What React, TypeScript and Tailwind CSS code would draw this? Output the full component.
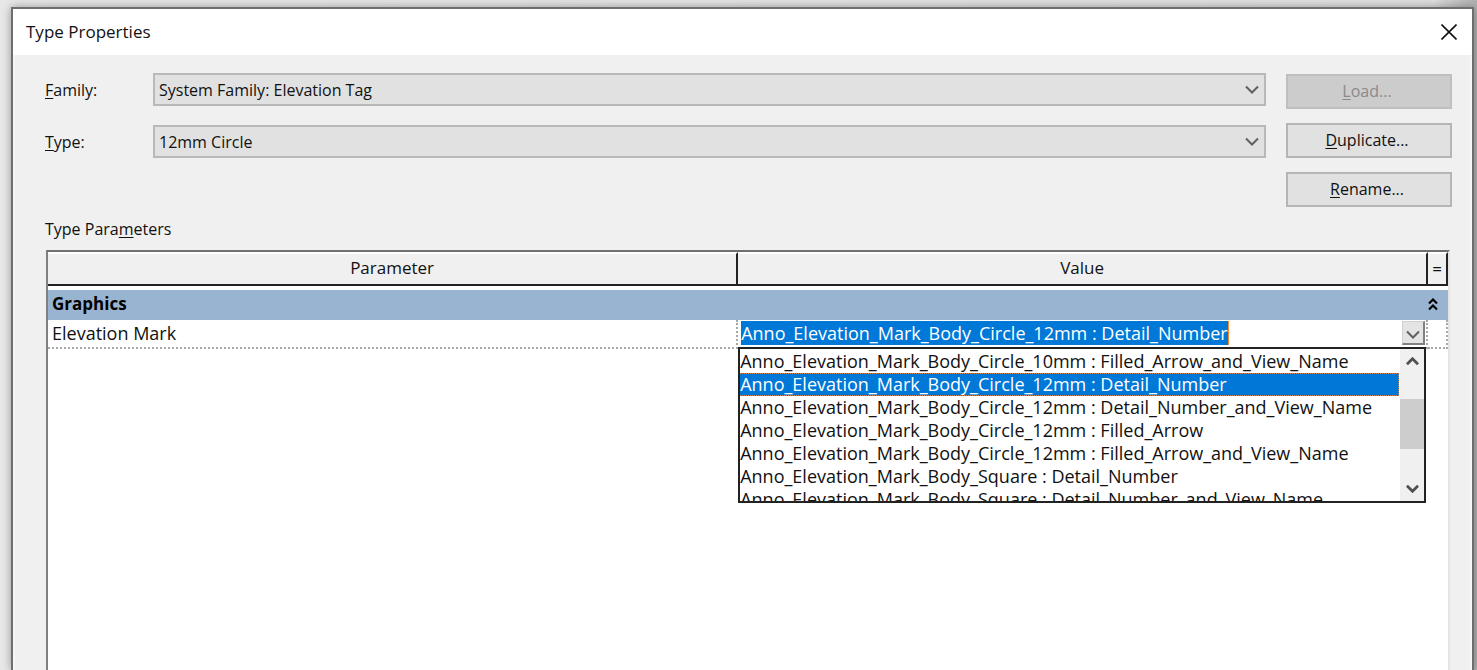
import { useState } from 'react';

const markTypes = [
  'Anno_Elevation_Mark_Body_Circle_10mm : Filled_Arrow_and_View_Name',
  'Anno_Elevation_Mark_Body_Circle_12mm : Detail_Number',
  'Anno_Elevation_Mark_Body_Circle_12mm : Detail_Number_and_View_Name',
  'Anno_Elevation_Mark_Body_Circle_12mm : Filled_Arrow',
  'Anno_Elevation_Mark_Body_Circle_12mm : Filled_Arrow_and_View_Name',
  'Anno_Elevation_Mark_Body_Square : Detail_Number',
  'Anno_Elevation_Mark_Body_Square : Detail_Number_and_View_Name',
];

function Key({ children }: { children: string }) {
  return <span className="underline decoration-1 underline-offset-2">{children}</span>;
}

function Chevron({ className, up = false }: { className: string; up?: boolean }) {
  return (
    <svg viewBox="0 0 14 9" fill="none" stroke="currentColor" className={className} aria-hidden="true">
      <path d={up ? 'M1 7.5 7 1.5 13 7.5' : 'M1 1.5 7 7.5 13 1.5'} />
    </svg>
  );
}

function DialogSelect({ id, value }: { id: string; value: string }) {
  return (
    <div className="grid items-center">
      <select
        id={id}
        defaultValue={value}
        className="col-start-1 row-start-1 h-[33px] w-full appearance-none rounded-none border-2 border-[#b9b9b9] bg-[#e1e1e1] pl-1 text-base text-[#111]"
      >
        <option>{value}</option>
      </select>
      <Chevron className="pointer-events-none col-start-1 row-start-1 mr-[7px] h-[9px] w-[14px] justify-self-end stroke-2 text-[#606060]" />
    </div>
  );
}

const buttonStyle =
  'h-[35px] w-full border-2 border-[#b5b5b5] bg-[#e1e1e1] pr-1 pb-[2px] text-base text-[#111] disabled:border-[#bfbfbf] disabled:bg-[#cccccc] disabled:text-[#8a8a8a]';

export default function App() {
  const [mark, setMark] = useState(markTypes[1]);

  return (
    <div className="flex h-screen flex-col overflow-hidden bg-linear-to-r from-[#e8e8e8] from-0% via-[#e0e0e0] via-97% to-[#b0b0b0] pt-[7px] pr-[3px] pl-[11px] font-['Open_Sans',sans-serif] text-[#111]">
      <div
        role="dialog"
        aria-labelledby="dialog-title"
        className="flex min-h-0 flex-1 flex-col border-2 border-b-0 border-[#6e6e6e] bg-[#f0f0f0] shadow-[0_0_9px_rgba(0,0,0,0.35)]"
      >
        <header className="flex h-[46px] shrink-0 items-center justify-between bg-white pr-[15px] pl-[13px]">
          <h1 id="dialog-title" className="text-[17px]">
            Type Properties
          </h1>
          <button type="button" aria-label="Close">
            <svg viewBox="0 0 16 16" className="size-4" fill="none" stroke="#111" strokeWidth="1.6">
              <path d="M.5.5 15.5 15.5M15.5.5.5 15.5" />
            </svg>
          </button>
        </header>

        <div className="flex min-h-0 flex-1 flex-col border-x-2 border-x-[#f6f6f6] pr-[18px] pl-[30px] pt-[18px]">
          <div className="flex gap-5">
            <div className="grid h-[85px] flex-1 grid-cols-[108px_1fr] content-start items-center gap-y-[19px] text-base">
              <label htmlFor="family">
                <Key>F</Key>amily:
              </label>
              <DialogSelect id="family" value="System Family: Elevation Tag" />
              <label htmlFor="type">
                <Key>T</Key>ype:
              </label>
              <DialogSelect id="type" value="12mm Circle" />
            </div>
            <div className="flex w-[166px] flex-col gap-[14px] pt-px">
              <button type="button" disabled className={buttonStyle}>
                <Key>L</Key>oad...
              </button>
              <button type="button" className={buttonStyle}>
                <Key>D</Key>uplicate...
              </button>
              <button type="button" className={buttonStyle}>
                <Key>R</Key>ename...
              </button>
            </div>
          </div>

          <h2 id="params-title" className="mt-[10px] mb-[9px] text-base leading-6">
            Type Para<Key>m</Key>eters
          </h2>

          <div className="mr-[2px] ml-px min-h-0 flex-1 border-t-2 border-r-2 border-l-2 border-t-[#707070] border-r-[#e4e4e4] border-l-[#808080] bg-white">
            <table
              aria-labelledby="params-title"
              className="w-full table-fixed border-separate border-spacing-0 text-lg leading-6"
            >
              <colgroup>
                <col className="w-[49.3%]" />
                <col />
                <col className="w-5" />
              </colgroup>
              <thead>
                <tr className="h-[34px] bg-[#f0f0f0] text-[17px]">
                  <th className="border-t-2 border-r-2 border-b-2 border-t-white border-r-[#222] border-b-[#222] p-0 pb-[2px] font-normal">
                    Parameter
                  </th>
                  <th className="border-t-2 border-r-2 border-b-2 border-t-white border-r-[#222] border-b-[#222] p-0 pb-[2px] font-normal">
                    Value
                  </th>
                  <th className="border-t-2 border-r-2 border-b-2 border-t-white border-r-[#222] border-b-[#222] p-0 font-normal">
                    =
                  </th>
                </tr>
              </thead>
              <tbody>
                <tr className="h-[34px]">
                  <th
                    colSpan={3}
                    className="border-t-4 border-white bg-[#99b4d1] p-0 text-left text-[17px] font-bold text-black"
                  >
                    <div className="flex items-center justify-between pr-[10px] pb-[2px] pl-1">
                      Graphics
                      <button type="button" aria-label="Collapse Graphics">
                        <svg viewBox="0 0 10 13" className="h-[13px] w-[10px]" fill="none" stroke="#000" strokeWidth="2.2">
                          <path d="M1 5.5 5 1.5 9 5.5M1 11.5 5 7.5 9 11.5" />
                        </svg>
                      </button>
                    </div>
                  </th>
                </tr>
                <tr className="h-[29px]">
                  <td className="border-r-2 border-b-2 border-dotted border-[#a8a8a8] p-0 pb-[2px] pl-1">
                    <label htmlFor="mark">Elevation Mark</label>
                  </td>
                  <td className="relative border-r-2 border-b-2 border-dotted border-[#a8a8a8] p-0 pb-[2px]">
                    <div className="flex items-center justify-between pl-[3px]">
                      <input
                        id="mark"
                        role="combobox"
                        aria-expanded="true"
                        aria-controls="mark-list"
                        value={mark}
                        readOnly
                        className="h-6 [field-sizing:content] border-r border-[#ff8728] bg-[#0078d7] text-white outline-none"
                      />
                      <button
                        type="button"
                        aria-label="Show values"
                        className="mr-px flex h-6 w-[23px] items-center justify-center border-r-2 border-b-2 border-t border-l border-t-[#d0d0d0] border-r-[#808080] border-b-[#808080] border-l-[#d0d0d0] bg-[#e4e4e4] pt-1"
                      >
                        <Chevron className="h-[9px] w-[14px] stroke-2 text-[#606060]" />
                      </button>
                    </div>
                    <div className="absolute top-full right-0 left-0 z-10 flex h-[156px] border-2 border-[#222] bg-white">
                      <ul
                        id="mark-list"
                        role="listbox"
                        aria-label="Elevation Mark"
                        className="flex-1 overflow-hidden pt-px"
                      >
                        {markTypes.map((name) => (
                          <li
                            key={name}
                            role="option"
                            aria-selected={name === mark}
                            onClick={() => setMark(name)}
                            className="mr-px h-[23px] border-y border-r border-transparent leading-[21px] whitespace-nowrap aria-selected:border-dotted aria-selected:border-[#d08050] aria-selected:bg-[#0078d7] aria-selected:text-white"
                          >
                            {name}
                          </li>
                        ))}
                      </ul>
                      <div className="flex w-6 flex-col bg-[#f0f0f0]">
                        <button type="button" aria-label="Scroll up" className="flex h-[25px] items-center justify-center">
                          <Chevron up className="h-[9px] w-[13px] stroke-3 text-[#505050]" />
                        </button>
                        <div className="flex-1 pt-[25px]">
                          <div className="h-[50px] bg-[#cdcdcd]" />
                        </div>
                        <button type="button" aria-label="Scroll down" className="flex h-[25px] items-center justify-center">
                          <Chevron className="h-[9px] w-[13px] stroke-3 text-[#505050]" />
                        </button>
                      </div>
                    </div>
                  </td>
                  <td className="border-r-2 border-b-2 border-dotted border-[#a8a8a8] p-0" />
                </tr>
              </tbody>
            </table>
          </div>
        </div>
      </div>
    </div>
  );
}
